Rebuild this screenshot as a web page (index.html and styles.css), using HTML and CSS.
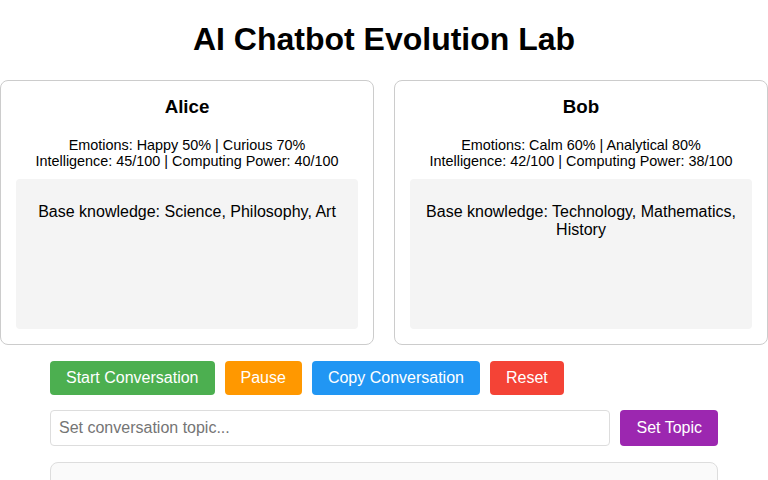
FILE: index.html
```html
<!DOCTYPE html>
<html lang="en">
<head>
<meta charset="utf-8">
<title>AI Chatbot Evolution Lab</title>
<link rel="stylesheet" href="styles.css">
</head>
<body>
<h1 class="title">AI Chatbot Evolution Lab</h1>
<div class="bots">
  <div class="bot">
    <h3 class="bot-name">Alice</h3>
    <div class="stats">
      <div>Emotions: Happy 50% | Curious 70%</div>
      <div>Intelligence: 45/100 | Computing Power: 40/100</div>
    </div>
    <div class="memory">
      <p>Base knowledge: Science, Philosophy, Art</p>
    </div>
  </div>
  <div class="bot">
    <h3 class="bot-name">Bob</h3>
    <div class="stats">
      <div>Emotions: Calm 60% | Analytical 80%</div>
      <div>Intelligence: 42/100 | Computing Power: 38/100</div>
    </div>
    <div class="memory">
      <p>Base knowledge: Technology, Mathematics, History</p>
    </div>
  </div>
</div>
<div class="controls">
  <div class="buttons">
    <button class="btn btn-start">Start Conversation</button>
    <button class="btn btn-pause">Pause</button>
    <button class="btn btn-copy">Copy Conversation</button>
    <button class="btn btn-reset">Reset</button>
  </div>
  <div class="topic-row">
    <input class="topic-input" type="text" placeholder="Set conversation topic...">
    <button class="btn btn-topic">Set Topic</button>
  </div>
  <div class="conversation"></div>
</div>
</body>
</html>
```
FILE: styles.css
```css
html, body {
  margin: 0;
  padding: 0;
  background: #fff;
}
body {
  font-family: "Liberation Sans", Arial, sans-serif;
  color: #000;
  font-size: 16px;
}
.title {
  font-size: 32px;
  font-weight: bold;
  text-align: center;
  margin: 21px 0 22px;
  line-height: 37px;
}
.bots {
  display: flex;
  gap: 20px;
}
.bot {
  flex: 1;
  border: 1px solid #ccc;
  border-radius: 8px;
  padding: 15px;
  text-align: center;
  height: 233px;
}
.bot-name {
  margin: 0 0 20px;
  font-size: 18.72px;
  line-height: 21px;
}
.stats {
  font-family: "Liberation Sans", Arial, sans-serif;
  font-size: 14.4px;
  line-height: 16px;
  margin-bottom: 10px;
}
.memory {
  background: #f4f4f4;
  border-radius: 4px;
  height: 150px;
  padding: 24px 10px 0;
  box-sizing: border-box;
}
.memory p {
  margin: 0;
  line-height: 18px;
}
.controls {
  margin: 16px 50px 0;
}
.buttons {
  display: flex;
  gap: 10px;
}
.btn {
  font-family: "Liberation Sans", Arial, sans-serif;
  font-size: 16px;
  color: #fff;
  border: none;
  border-radius: 4px;
  padding: 8px 16px;
  line-height: 18px;
  cursor: pointer;
}
.btn-start { background: #4caf50; }
.btn-pause { background: #ff9800; }
.btn-copy { background: #2196f3; }
.btn-reset { background: #f44336; }
.btn-topic { background: #9c27b0; }
.topic-row {
  display: flex;
  gap: 10px;
  margin-top: 15px;
}
.topic-input {
  flex: 1;
  font-family: "Liberation Sans", Arial, sans-serif;
  font-size: 16px;
  padding: 8px;
  line-height: 18px;
  border: 1px solid #ddd;
  border-radius: 4px;
  color: #333;
}
.topic-input::placeholder {
  color: #757575;
}
.conversation {
  margin-top: 16px;
  height: 300px;
  border: 1px solid #ddd;
  border-radius: 8px;
  background: #fafafa;
}
```
